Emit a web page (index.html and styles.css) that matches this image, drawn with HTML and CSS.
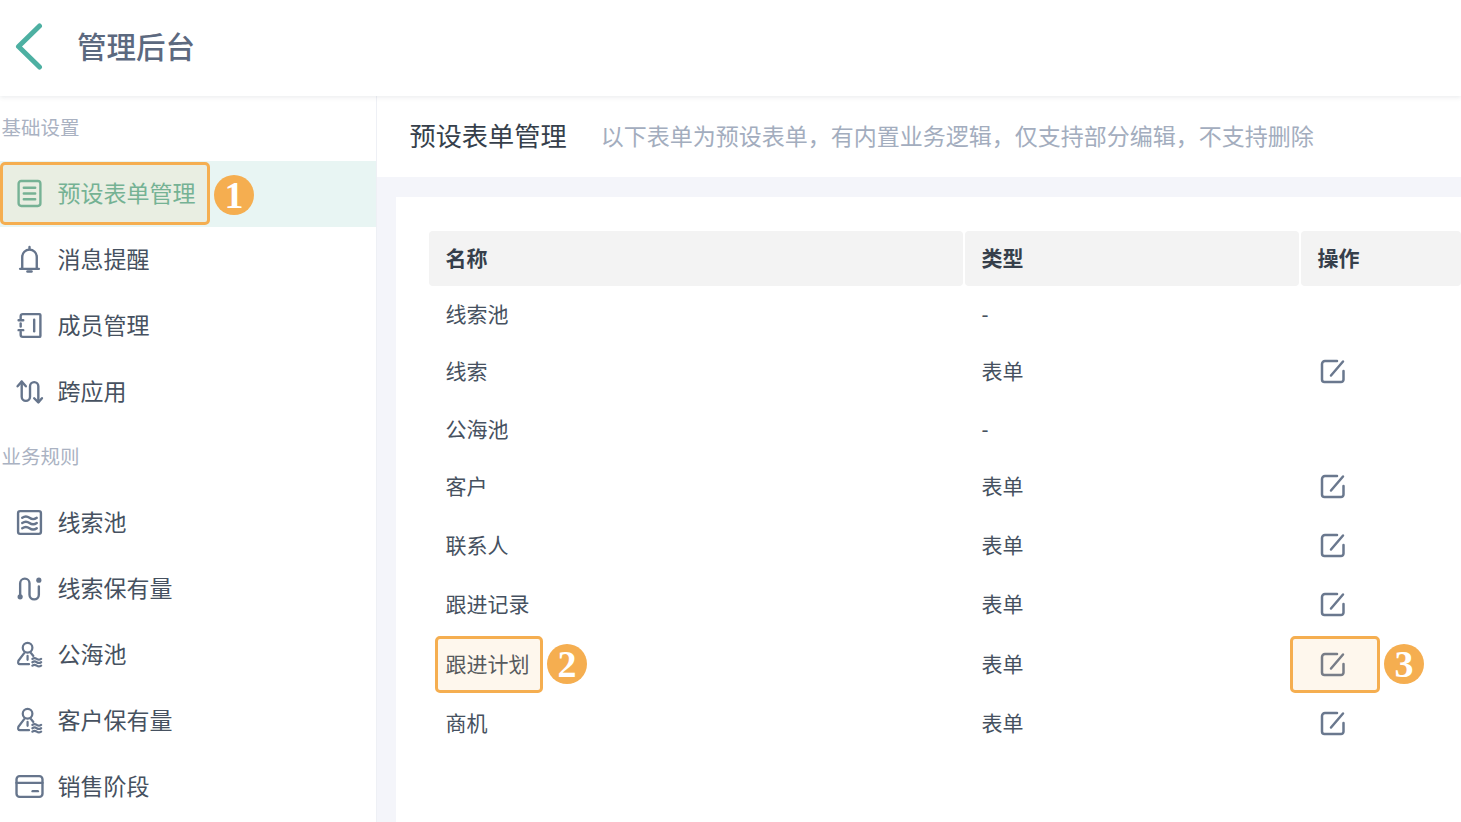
FILE: index.html
```html
<!DOCTYPE html>
<html lang="zh-CN">
<head>
<meta charset="utf-8">
<title>管理后台</title>
<link rel="stylesheet" href="styles.css">
</head>
<body>
<svg class="sprites" aria-hidden="true">
  <symbol id="i-edit" viewBox="0 0 26 26"><path d="M23.500 12v8.500a2.500 2.500 0 0 1-2.500 2.500H4.500a2.500 2.500 0 0 1-2.500-2.500V5a3 3 0 0 1 3-3h12"/><path d="M11 16.500 23 2.500"/></symbol>
  <symbol id="i-person" viewBox="0 0 28 28"><circle cx="12" cy="7" r="5"/><path d="M8.500 12.500 2.500 20.500q-1 3.500 1.500 3.500h9.500"/><path d="M15.500 12.500 18 15.500"/><path d="M12 15.500v4"/><path class="thin" d="M17 18.500q2.200 -1.500 4.500 0t4.500 0M17 22q2.200 -1.500 4.500 0t4.500 0M17 25.500q2.200 -1.500 4.500 0t4.500 0"/></symbol>
</svg>
<header class="topbar">
  <svg class="back" viewBox="0 0 28 48"><path d="M24.500 3 3.500 23.500 24.500 44"/></svg>
  <h1 class="app-title">管理后台</h1>
</header>
<div class="layout">
  <aside class="sidebar">
    <div class="group-label">基础设置</div>
    <div class="nav-item active">
      <svg class="nav-icon" viewBox="0 0 26 26"><rect x="2.500" y="1" width="21" height="24" rx="2.500"/><path d="M7.500 7.500h11M7.500 13h11M7.500 18.500h11"/></svg>
      <span>预设表单管理</span>
      <i class="mark mark-menu"></i>
      <b class="badge badge-menu">1</b>
    </div>
    <div class="nav-item">
      <svg class="nav-icon" viewBox="0 0 26 26"><path d="M6 22V10.500a7 7 0 0 1 14 0V22"/><path d="M4 22h18"/><path d="M13 1v2"/><path d="M11 24.500h4"/></svg>
      <span>消息提醒</span>
    </div>
    <div class="nav-item">
      <svg class="nav-icon" viewBox="0 0 26 26"><path d="M4.500 7V4a2 2 0 0 1 2-2h16a1 1 0 0 1 1 1v20a1 1 0 0 1-1 1h-16a2 2 0 0 1-2-2v-3"/><path d="M2.500 8h4.500M2.500 17.500h4.500"/><path d="M4.500 11v3"/><path d="M17.500 7.500v11"/></svg>
      <span>成员管理</span>
    </div>
    <div class="nav-item">
      <svg class="nav-icon" viewBox="0 0 26 26"><path d="M1.500 8 5.500 3.500 9.500 8"/><path d="M5.500 3.500V18a4 4 0 0 0 8 0V8a4 4 0 0 1 8 0v15"/><path d="M17.500 19.500 21.500 23.500l3.500-4"/></svg>
      <span>跨应用</span>
    </div>
    <div class="group-label">业务规则</div>
    <div class="nav-item">
      <svg class="nav-icon" viewBox="0 0 26 26"><rect x="2" y="2" width="22" height="22" rx="2"/><path d="M6 8.500q3.500-2.500 7 0t7 0M6 13.500q3.500-2.500 7 0t7 0M6 18.500q3.500-2.500 7 0t7 0"/></svg>
      <span>线索池</span>
    </div>
    <div class="nav-item">
      <svg class="nav-icon" viewBox="0 0 26 26"><path d="M4 19V8a4.500 4.500 0 0 1 9 0v11a4.500 4.500 0 0 0 9 0v-8"/><circle class="dot" cx="4" cy="21" r="2.500"/><circle class="dot" cx="22" cy="5" r="2.500"/></svg>
      <span>线索保有量</span>
    </div>
    <div class="nav-item">
      <svg class="nav-icon" viewBox="0 0 28 28"><use href="#i-person"/></svg>
      <span>公海池</span>
    </div>
    <div class="nav-item">
      <svg class="nav-icon" viewBox="0 0 28 28"><use href="#i-person"/></svg>
      <span>客户保有量</span>
    </div>
    <div class="nav-item">
      <svg class="nav-icon" viewBox="0 0 26 26"><rect x="0.500" y="3" width="25" height="20" rx="3"/><path d="M0.500 9.500h25"/><path d="M16 17.500h5"/></svg>
      <span>销售阶段</span>
    </div>
  </aside>
  <main class="content">
    <div class="page-head">
      <h2 class="page-title">预设表单管理</h2>
      <p class="page-hint">以下表单为预设表单，有内置业务逻辑，仅支持部分编辑，不支持删除</p>
    </div>
    <section class="card">
      <div class="table">
        <div class="row head"><div>名称</div><div>类型</div><div>操作</div></div>
        <div class="row"><div>线索池</div><div class="dash">-</div><div></div></div>
        <div class="row"><div>线索</div><div>表单</div><div><svg class="edit"><use href="#i-edit"/></svg></div></div>
        <div class="row"><div>公海池</div><div class="dash">-</div><div></div></div>
        <div class="row"><div>客户</div><div>表单</div><div><svg class="edit"><use href="#i-edit"/></svg></div></div>
        <div class="row tall"><div>联系人</div><div>表单</div><div><svg class="edit"><use href="#i-edit"/></svg></div></div>
        <div class="row tall"><div>跟进记录</div><div>表单</div><div><svg class="edit"><use href="#i-edit"/></svg></div></div>
        <div class="row tall">
          <div class="anchor">跟进计划<i class="mark mark-name"></i><b class="badge badge-name">2</b></div>
          <div>表单</div>
          <div class="anchor"><svg class="edit"><use href="#i-edit"/></svg><i class="mark mark-op"></i><b class="badge badge-op">3</b></div>
        </div>
        <div class="row tall"><div>商机</div><div>表单</div><div><svg class="edit"><use href="#i-edit"/></svg></div></div>
      </div>
    </section>
  </main>
</div>
</body>
</html>
```
FILE: styles.css
```css
* { box-sizing: border-box; }
html, body { height: 100%; }
body {
  margin: 0;
  width: 1461px;
  height: 822px;
  overflow: hidden;
  background: #fff;
  color: #465160;
  font-family: "Noto Sans CJK SC", "Noto Sans", sans-serif;
}
.sprites { display: none; }

.topbar {
  position: relative;
  z-index: 2;
  height: 96px;
  display: flex;
  align-items: center;
  padding: 0 0 3px 15px;
  background: #fff;
  box-shadow: 0 1px 5px rgba(60, 70, 90, .12);
}
.back { width: 28px; height: 48px; margin-right: 34px; fill: none; stroke: #4db0a2; stroke-width: 5; stroke-linecap: round; stroke-linejoin: round; }
.app-title { margin: 0 0 3px; font-size: 29.500px; line-height: 40px; font-weight: 500; color: #5c697f; }

.layout { display: flex; height: 726px; }
.sidebar { flex: 0 0 377px; overflow: hidden; background: #fff; border-right: 1px solid #eef0f5; }
.group-label { height: 65px; padding: 18px 0 0 1.500px; font-size: 19.500px; line-height: 25px; color: #aab2c2; }
.nav-item {
  position: relative;
  height: 66px;
  display: flex;
  align-items: center;
  padding-left: 16px;
  font-size: 23px;
  color: #465160;
}
.nav-item span { padding-bottom: 4px; }
.nav-item.active { background: #e8f5f3; color: #67b39c; }
.nav-icon { width: 27px; height: 27px; margin: 0 14.500px 2px 0; flex: none; fill: none; stroke: #66758c; stroke-width: 2.300; stroke-linecap: round; stroke-linejoin: round; overflow: visible; }
.nav-item.active .nav-icon { stroke: #68b39d; }
.nav-icon .dot { fill: #66758c; stroke: none; }
.nav-icon .thin { stroke-width: 1.500; }

.content { flex: 1; min-width: 0; background: #f4f5fa; }
.page-head { height: 81px; display: flex; align-items: center; padding: 0 0 4px 32.500px; background: #fff; }
.page-title { margin: 0 34px 0 0; font-size: 26.200px; line-height: 36px; font-weight: 400; color: #363f4b; }
.page-hint { margin: 0; font-size: 23px; line-height: 32px; color: #a3adbe; white-space: nowrap; }

.card { height: 625px; margin: 20px 0 0 19px; padding: 34px 0 0 33px; background: #fff; }
.row {
  display: grid;
  grid-template-columns: 534px 334px 1fr;
  column-gap: 2px;
  height: 57.500px;
  align-items: center;
  font-family: "Liberation Sans", "Noto Sans CJK SC", sans-serif;
  font-size: 21px;
}
.row.tall { height: 59.500px; }
.row > div { padding: 0 0 4px 16.500px; }
.row > .dash { padding: 0 0 0 16.500px; }
.row.head { height: 55px; align-items: stretch; font-weight: 700; color: #363f4b; }
.row.head > div { display: flex; align-items: center; background: #f3f3f3; border-radius: 4px; }
.edit { display: block; width: 26px; height: 26px; margin: 0 0 -4px 2.500px; fill: none; stroke: #6a788e; stroke-width: 2.500; stroke-linecap: round; stroke-linejoin: round; }

.row > .anchor { position: relative; align-self: stretch; display: flex; align-items: center; }
.mark {
  position: absolute;
  display: block;
  background: rgba(245, 174, 80, .1);
  border: 3px solid #f5ae50;
  border-radius: 5px;
  pointer-events: none;
}
.mark-menu { left: 0; top: 1px; width: 210px; height: 63px; }
.mark-name { left: 6px; top: 1px; width: 108px; height: 57px; }
.mark-op { left: -11px; top: 1px; width: 90px; height: 57px; }
.badge {
  position: absolute;
  width: 40px;
  height: 40px;
  border-radius: 50%;
  background: #f5ae50;
  color: #fff;
  font: 700 38px/40px "Liberation Serif", serif;
  text-align: center;
}
.badge-menu { left: 214px; top: 14px; }
.badge-name { left: 118px; top: 9px; }
.badge-op { left: 83px; top: 9px; }
```
